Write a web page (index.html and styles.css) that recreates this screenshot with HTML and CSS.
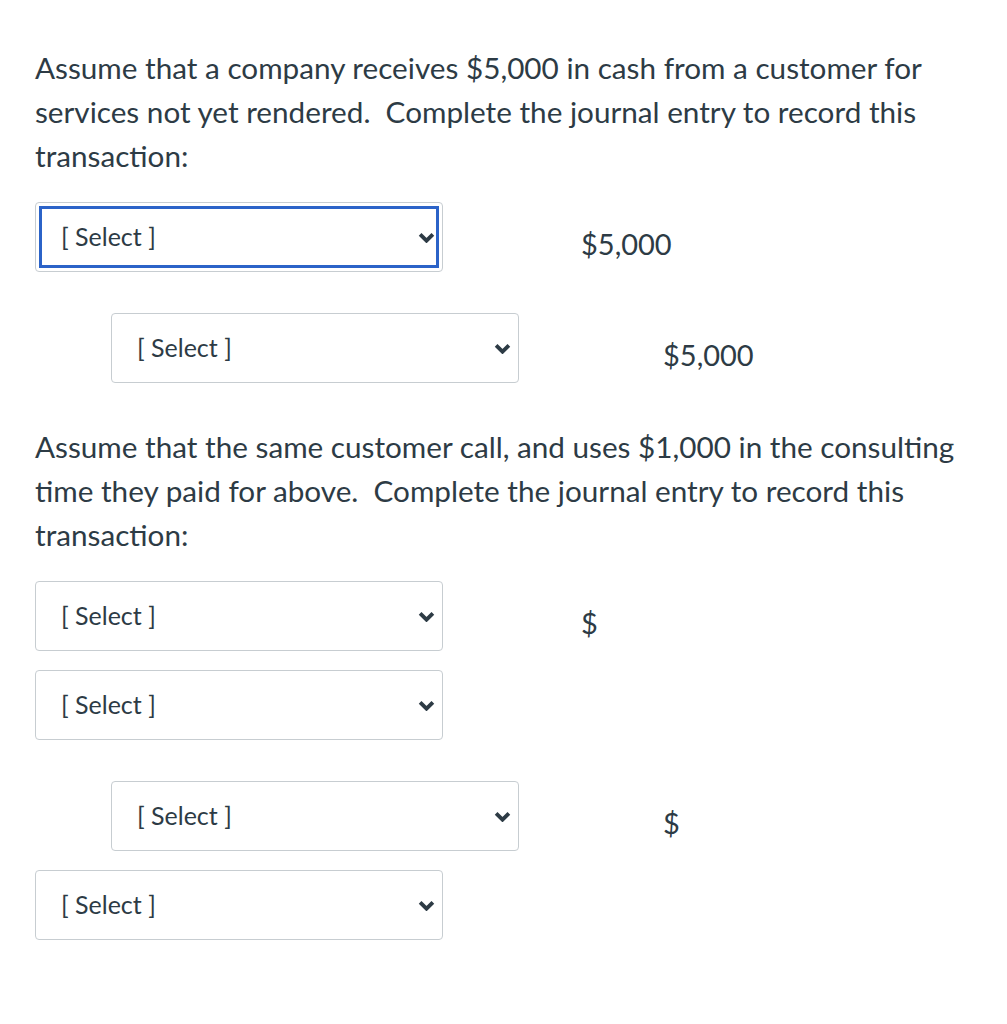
FILE: index.html
```html
<!DOCTYPE html>
<html>
<head>
<meta charset="utf-8">
<link rel="stylesheet" href="styles.css">
</head>
<body>
<div class="question">
  <p class="prompt">Assume that a company receives $5,000 in cash from a customer for services not yet rendered.&nbsp; Complete the journal entry to record this transaction:</p>
  <div class="entry">
    <div class="row">
      <div class="select focused"><span>[ Select ]</span><svg class="chev" viewBox="0 0 16 10"><path d="M2 2 L8 8 L14 2" /></svg></div>
      <div class="amount">$5,000</div>
    </div>
    <div class="row credit">
      <div class="select"><span>[ Select ]</span><svg class="chev" viewBox="0 0 16 10"><path d="M2 2 L8 8 L14 2" /></svg></div>
      <div class="amount">$5,000</div>
    </div>
  </div>

  <p class="prompt second">Assume that the same customer call, and uses $1,000 in the consulting time they paid for above.&nbsp; Complete the journal entry to record this transaction:</p>
  <div class="entry">
    <div class="row">
      <div class="select"><span>[ Select ]</span><svg class="chev" viewBox="0 0 16 10"><path d="M2 2 L8 8 L14 2" /></svg></div>
      <div class="amount">$</div>
    </div>
    <div class="row">
      <div class="select"><span>[ Select ]</span><svg class="chev" viewBox="0 0 16 10"><path d="M2 2 L8 8 L14 2" /></svg></div>
    </div>
    <div class="row credit">
      <div class="select"><span>[ Select ]</span><svg class="chev" viewBox="0 0 16 10"><path d="M2 2 L8 8 L14 2" /></svg></div>
      <div class="amount">$</div>
    </div>
    <div class="row">
      <div class="select"><span>[ Select ]</span><svg class="chev" viewBox="0 0 16 10"><path d="M2 2 L8 8 L14 2" /></svg></div>
    </div>
  </div>
</div>
</body>
</html>
```
FILE: styles.css
```css
html, body {
  margin: 0;
  padding: 0;
  background: #ffffff;
}
body {
  font-family: Lato, "Open Sans", sans-serif;
  color: #2d3b45;
}
.question {
  padding: 46px 0 0 35px;
}
.prompt {
  margin: 0;
  width: 935px;
  font-size: 29.7px;
  line-height: 44px;
}
.prompt.second {
  margin-top: 42px;
}
.entry {
  display: flex;
  flex-direction: column;
  margin-top: 24px;
  gap: 19px;
}
.row {
  display: flex;
  align-items: center;
}
.row.credit {
  margin-left: 76px;
  margin-top: 22px;
}
.select {
  box-sizing: border-box;
  width: 408px;
  height: 70px;
  border: 1px solid #c7cdd1;
  border-radius: 4px;
  background: #fff;
  display: flex;
  align-items: center;
  justify-content: space-between;
  padding: 0 7px 0 25px;
  font-size: 25px;
}
.select span {
  margin-top: -3px;
}
.select.focused {
  outline: 3px solid #2b63c8;
  outline-offset: -7px;
}
.chev {
  width: 17px;
  height: 11px;
}
.chev path {
  fill: none;
  stroke: #2d3b45;
  stroke-width: 3.6;
  stroke-linecap: butt;
  stroke-linejoin: miter;
}
.amount {
  margin-left: 138px;
  margin-top: 12px;
  font-size: 29px;
}
.row.credit .amount {
  margin-left: 144px;
}
```
